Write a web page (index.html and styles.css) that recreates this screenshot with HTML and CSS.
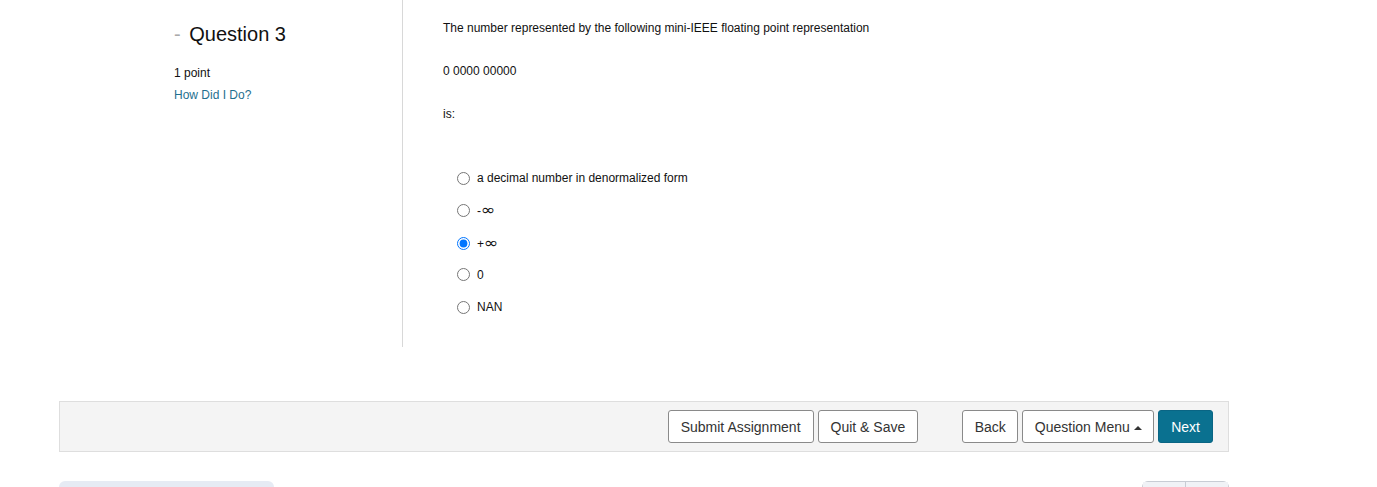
FILE: index.html
```html
<!DOCTYPE html>
<html lang="en">
<head>
  <meta charset="UTF-8">
  <meta name="viewport" content="width=device-width, initial-scale=1.0">
  <title>Question 3</title>
  <link rel="stylesheet" href="styles.css">
</head>
<body>
  <div class="page">
    <section class="pregunta">
      <aside class="info">
        <h2><span class="guion">-</span> Question 3</h2>
        <p class="puntos">1 point</p>
        <a class="enlace" href="#">How Did I Do?</a>
      </aside>

      <div class="enunciado">
        <p>The number represented by the following mini-IEEE floating point representation</p>
        <p>0 0000 00000</p>
        <p>is:</p>

        <ul class="opciones">
          <li><label><input type="radio" name="q3"><span>a decimal number in denormalized form</span></label></li>
          <li><label><input type="radio" name="q3"><span>-<span class="infinito">&infin;</span></span></label></li>
          <li><label><input type="radio" name="q3" checked><span>+<span class="infinito">&infin;</span></span></label></li>
          <li><label><input type="radio" name="q3"><span>0</span></label></li>
          <li><label><input type="radio" name="q3"><span>NAN</span></label></li>
        </ul>
      </div>
    </section>

    <footer class="barra">
      <div class="grupo">
        <button class="boton">Submit Assignment</button>
        <button class="boton">Quit &amp; Save</button>
      </div>
      <div class="grupo">
        <button class="boton estrecho">Back</button>
        <button class="boton estrecho">Question Menu <span class="flecha"></span></button>
        <button class="boton primario">Next</button>
      </div>
    </footer>

    <div class="pie">
      <div class="pastilla"></div>
      <div class="pestanas">
        <span></span>
        <span></span>
      </div>
    </div>
  </div>
</body>
</html>
```

FILE: styles.css
```css
body {
  margin: 0;
  padding: 0;
  font-family: "Liberation Sans", Arial, sans-serif;
  color: #111;
  background-color: #fff;
  overflow: hidden;
}

.page {
  width: 1170px;
  margin-left: 59px;
}

.pregunta {
  display: flex;
  height: 347px;
}

.info {
  width: 229px;
  margin-left: 115px;
  border-right: 1px solid #d8d8d8;
  box-sizing: border-box;
}

.info h2 {
  margin: 22px 0 0;
  font-size: 20px;
  font-weight: normal;
  line-height: 24px;
}

.guion {
  color: #aaa;
  margin-right: 3px;
}

.puntos {
  margin: 20px 0 0;
  font-size: 12px;
  line-height: 14px;
}

.enlace {
  display: block;
  margin-top: 8px;
  font-size: 12px;
  line-height: 14px;
  color: #1f6f8f;
  text-decoration: none;
}

.enunciado {
  padding-left: 40px;
  font-size: 12px;
}

.enunciado p {
  margin: 21px 0 0;
  line-height: 14px;
}

.enunciado p + p {
  margin-top: 29px;
}

.opciones {
  list-style: none;
  margin: 50px 0 0;
  padding-left: 13px;
}

.opciones li {
  height: 32.3px;
}

.opciones label {
  display: flex;
  align-items: center;
  gap: 7px;
  line-height: 14px;
}

.opciones input {
  margin: 0 0 0 1px;
  width: 13px;
  height: 13px;
}

.infinito {
  font-family: "DejaVu Sans", sans-serif;
  font-size: 15px;
  line-height: 14px;
  transform: scaleX(1.15);
  display: inline-block;
  margin-left: 1px;
}

.barra {
  display: flex;
  justify-content: flex-end;
  gap: 44px;
  margin-top: 54px;
  padding: 8px 15px 8px 0;
  background-color: #f4f4f4;
  border: 1px solid #dedede;
}

.grupo {
  display: flex;
  gap: 4px;
}

.boton {
  height: 33px;
  padding: 0 12px;
  font-family: "Liberation Sans", Arial, sans-serif;
  font-size: 14px;
  color: #333;
  background-color: #fff;
  border: 1px solid #8a8a8a;
  border-radius: 3px;
}

.estrecho {
  padding: 0 11.5px;
}

.flecha {
  display: inline-block;
  width: 0;
  height: 0;
  vertical-align: 2px;
  border-left: 4px solid transparent;
  border-right: 4px solid transparent;
  border-bottom: 4px solid #333;
}

.primario {
  color: #fff;
  background-color: #0a7190;
  border-color: #0a6584;
}

.pie {
  display: flex;
  justify-content: space-between;
  margin-top: 29px;
}

.pastilla {
  width: 215px;
  height: 20px;
  background-color: #e6ebf4;
  border-radius: 6px 6px 0 0;
}

.pestanas {
  display: flex;
  width: 87px;
  height: 20px;
  border: 1px solid #c8ccd4;
  border-radius: 6px 6px 0 0;
  box-sizing: border-box;
}

.pestanas span {
  flex: 1;
  background-color: #f0f2f6;
}

.pestanas span + span {
  border-left: 1px solid #c8ccd4;
}
```
